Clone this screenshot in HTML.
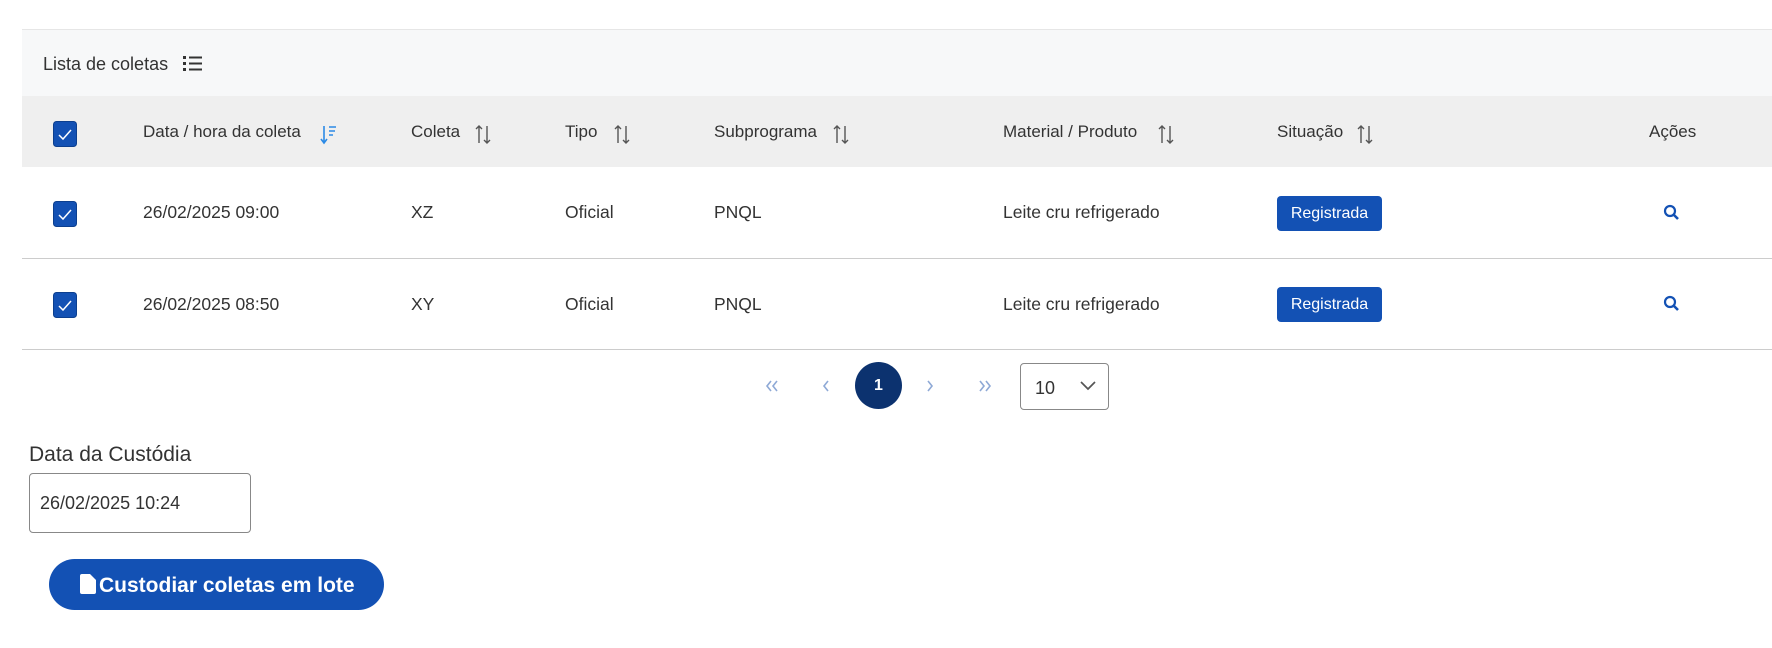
<!DOCTYPE html>
<html><head><meta charset="utf-8"><style>
*{box-sizing:border-box;margin:0;padding:0}
body{width:1772px;height:648px;background:#fff;font-family:"Liberation Sans",sans-serif;color:#333;position:relative;overflow:hidden}
.abs{position:absolute}
.title{left:22px;top:29px;width:1750px;height:67px;background:#f7f8f9;border-top:1px solid #e6e6e6}
.thead{left:22px;top:96px;width:1750px;height:71px;background:#efefef}
.line{left:22px;width:1750px;height:1px;background:#ccc}
.t{font-size:17px;color:#333;white-space:nowrap;line-height:20px}
.h{top:122px}
.r1{top:202px;font-size:17.5px}
.r2{top:294px;font-size:17.5px}
.badge{width:105px;height:35px;background:#1351b4;color:#fff;border-radius:4px;font-size:16px;text-align:center;line-height:35px}
</style></head><body>
<div class="abs title"></div>
<div class="abs t" style="left:43px;top:54px;font-size:18px">Lista de coletas</div>
<svg class="abs" style="left:183px;top:55px" width="19" height="17" viewBox="0 0 19 17"><g fill="#333"><rect x="0" y="1" width="3" height="3"/><rect x="0" y="7" width="3" height="3"/><rect x="0" y="13" width="3" height="3"/><rect x="6" y="1.5" width="13" height="2"/><rect x="6" y="7.5" width="13" height="2"/><rect x="6" y="13.5" width="13" height="2"/></g></svg>
<div class="abs thead"></div>
<div class="abs line" style="top:258px"></div>
<div class="abs line" style="top:349px"></div>

<svg class="abs" style="left:53px;top:121px" width="25" height="27"><rect x="0.5" y="0.5" width="23" height="25" rx="3" fill="#1351b4" stroke="#0c3f8f"/><path d="M6 14l4 4 8-9" stroke="#fff" stroke-width="1.5" fill="none"/></svg>
<svg class="abs" style="left:53px;top:201px" width="25" height="27"><rect x="0.5" y="0.5" width="23" height="25" rx="3" fill="#1351b4" stroke="#0c3f8f"/><path d="M6 14l4 4 8-9" stroke="#fff" stroke-width="1.5" fill="none"/></svg>
<svg class="abs" style="left:53px;top:292px" width="25" height="27"><rect x="0.5" y="0.5" width="23" height="25" rx="3" fill="#1351b4" stroke="#0c3f8f"/><path d="M6 14l4 4 8-9" stroke="#fff" stroke-width="1.5" fill="none"/></svg>

<div class="abs t h" style="left:143px">Data / hora da coleta</div>
<svg class="abs" style="left:320px;top:125px" width="17" height="20"><path d="M4 1v17M1 14l3 4 3-4" stroke="#2b8ae6" stroke-width="1.6" fill="none"/><path d="M9 2h7M9 6h6M9 10h4" stroke="#2b8ae6" stroke-width="1.5"/></svg>
<div class="abs t h" style="left:411px">Coleta</div>
<div class="abs t h" style="left:565px">Tipo</div>
<div class="abs t h" style="left:714px">Subprograma</div>
<div class="abs t h" style="left:1003px">Material / Produto</div>
<div class="abs t h" style="left:1277px">Situação</div>
<div class="abs t h" style="left:1649px">Ações</div>
<svg class="abs" style="left:475px;top:124px" width="16" height="21"><path d="M4 19V2M1 5l3-3 3 3M12 2v17M9 16l3 3 3-3" stroke="#555" stroke-width="1.4" fill="none"/></svg>
<svg class="abs" style="left:614px;top:124px" width="16" height="21"><path d="M4 19V2M1 5l3-3 3 3M12 2v17M9 16l3 3 3-3" stroke="#555" stroke-width="1.4" fill="none"/></svg>
<svg class="abs" style="left:833px;top:124px" width="16" height="21"><path d="M4 19V2M1 5l3-3 3 3M12 2v17M9 16l3 3 3-3" stroke="#555" stroke-width="1.4" fill="none"/></svg>
<svg class="abs" style="left:1158px;top:124px" width="16" height="21"><path d="M4 19V2M1 5l3-3 3 3M12 2v17M9 16l3 3 3-3" stroke="#555" stroke-width="1.4" fill="none"/></svg>
<svg class="abs" style="left:1357px;top:124px" width="16" height="21"><path d="M4 19V2M1 5l3-3 3 3M12 2v17M9 16l3 3 3-3" stroke="#555" stroke-width="1.4" fill="none"/></svg>

<div class="abs t r1" style="left:143px">26/02/2025 09:00</div>
<div class="abs t r1" style="left:411px">XZ</div>
<div class="abs t r1" style="left:565px">Oficial</div>
<div class="abs t r1" style="left:714px">PNQL</div>
<div class="abs t r1" style="left:1003px">Leite cru refrigerado</div>
<div class="abs badge" style="left:1277px;top:196px">Registrada</div>
<svg class="abs" style="left:1663px;top:204px" width="17" height="17"><circle cx="7" cy="7" r="5" stroke="#1351b4" stroke-width="2.2" fill="none"/><path d="M10.5 10.5l4.5 4.5" stroke="#1351b4" stroke-width="2.6"/></svg>

<div class="abs t r2" style="left:143px">26/02/2025 08:50</div>
<div class="abs t r2" style="left:411px">XY</div>
<div class="abs t r2" style="left:565px">Oficial</div>
<div class="abs t r2" style="left:714px">PNQL</div>
<div class="abs t r2" style="left:1003px">Leite cru refrigerado</div>
<div class="abs badge" style="left:1277px;top:287px">Registrada</div>
<svg class="abs" style="left:1663px;top:295px" width="17" height="17"><circle cx="7" cy="7" r="5" stroke="#1351b4" stroke-width="2.2" fill="none"/><path d="M10.5 10.5l4.5 4.5" stroke="#1351b4" stroke-width="2.6"/></svg>

<svg class="abs" style="left:764px;top:379px" width="16" height="14"><path d="M7 2L3 7l4 5M13 2L9 7l4 5" stroke="#8ea9d6" stroke-width="1.6" fill="none"/></svg>
<svg class="abs" style="left:821px;top:379px" width="10" height="14"><path d="M7 2L3 7l4 5" stroke="#8ea9d6" stroke-width="1.6" fill="none"/></svg>
<div class="abs" style="left:855px;top:362px;width:47px;height:47px;border-radius:50%;background:#0c326f;color:#fff;font-weight:bold;font-size:16px;text-align:center;line-height:47px">1</div>
<svg class="abs" style="left:925px;top:379px" width="10" height="14"><path d="M3 2l4 5-4 5" stroke="#8ea9d6" stroke-width="1.6" fill="none"/></svg>
<svg class="abs" style="left:977px;top:379px" width="16" height="14"><path d="M3 2l4 5-4 5M9 2l4 5-4 5" stroke="#8ea9d6" stroke-width="1.6" fill="none"/></svg>
<div class="abs" style="left:1020px;top:363px;width:89px;height:47px;border:1px solid #888;border-radius:4px"></div>
<div class="abs t" style="left:1035px;top:378px;font-size:18px">10</div>
<svg class="abs" style="left:1080px;top:381px" width="16" height="10"><path d="M1 1l7 7 7-7" stroke="#555" stroke-width="1.7" fill="none"/></svg>

<div class="abs t" style="left:29px;top:443px;font-size:21px;line-height:24px">Data da Custódia</div>
<div class="abs" style="left:29px;top:473px;width:222px;height:60px;border:1px solid #888;border-radius:4px"></div>
<div class="abs t" style="left:40px;top:493px;font-size:18px">26/02/2025 10:24</div>
<div class="abs" style="left:49px;top:559px;width:335px;height:51px;border-radius:26px;background:#1351b4"></div>
<svg class="abs" style="left:80px;top:574px" width="16" height="20"><path d="M0 2a2 2 0 0 1 2-2h8l6 6v12a2 2 0 0 1-2 2H2a2 2 0 0 1-2-2z" fill="#fff"/></svg>
<div class="abs" style="left:99px;top:573px;font-size:21px;line-height:26px;font-weight:bold;color:#fff;white-space:nowrap">Custodiar coletas em lote</div>
</body></html>
